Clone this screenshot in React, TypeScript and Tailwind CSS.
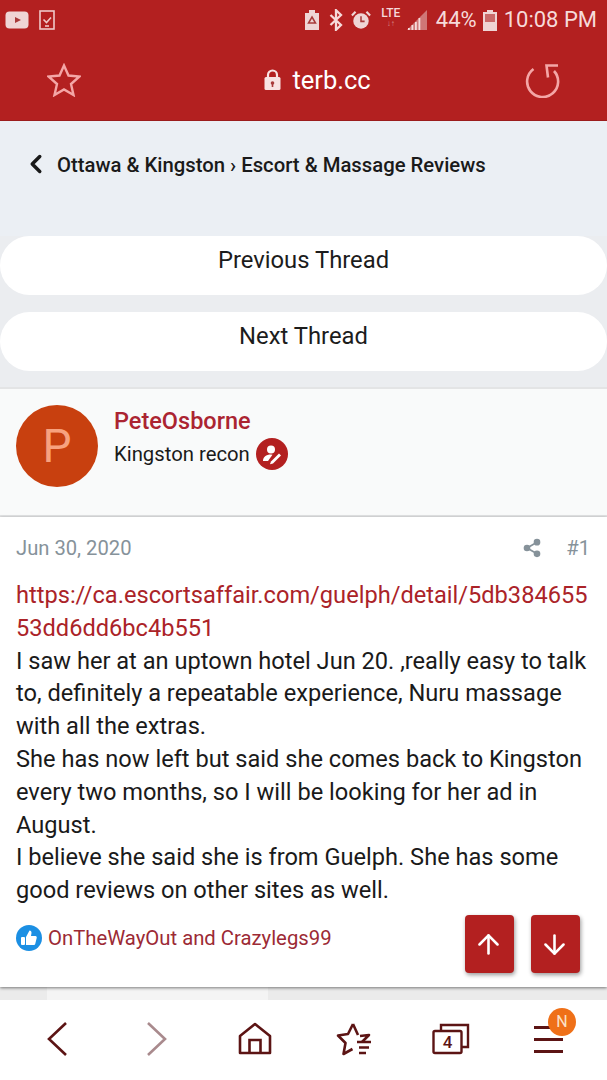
import React from 'react';
import { ArrowUp, ArrowDown, ChevronLeft, Share2 } from 'lucide-react';

const BODY_LINES = [
  'I saw her at an uptown hotel Jun 20. ,really easy to talk',
  'to, definitely a repeatable experience, Nuru massage',
  'with all the extras.',
  'She has now left but said she comes back to Kingston',
  'every two months, so I will be looking for her ad in',
  'August.',
  'I believe she said she is from Guelph. She has some',
  'good reviews on other sites as well.',
];

const StatusBar = () => (
  <div className="h-[40px] flex items-center justify-between pl-[5px] pr-[10px] text-[#f6dada]">
    <div className="flex items-center gap-[10px]">
      {/* youtube + task notification icons */}
      <svg width="24" height="18" viewBox="0 0 24 18">
        <rect x="0.5" y="0.5" width="23" height="17" rx="4" fill="#efd5d5" />
        <path d="M10 6l6 3-6 3z" fill="#a83a3a" />
      </svg>
      <svg width="16" height="20" viewBox="0 0 16 20" fill="none" stroke="#efc9c9" strokeWidth="1.6">
        <rect x="1" y="1" width="14" height="18" />
        <path d="M4.5 9.5l3 3 4.5-5" />
        <path d="M6 16h4" />
      </svg>
    </div>
    <div className="flex items-center">
      <svg width="14" height="20" viewBox="0 0 14 20" className="mr-[10px]">
        <path d="M4 0h6v3h4v17H0V3h4z" fill="#efd5d5" />
        <path d="M7 7l3.500 6h-7z" fill="none" stroke="#a83a3a" strokeWidth="1.500" />
      </svg>
      <svg width="14" height="22" viewBox="0 0 14 22" fill="none" stroke="#f6dada" strokeWidth="2.300" className="mr-[8px]">
        <path d="M1.500 6l10.500 10-5 4.800V1.200l5 4.800L1.500 16" />
      </svg>
      <svg width="20" height="22" viewBox="0 0 22 22" className="mr-[9px]">
        <circle cx="11" cy="12" r="8.500" fill="#efd5d5" />
        <path d="M11 7v5.500h4" fill="none" stroke="#a83a3a" strokeWidth="1.700" />
        <path d="M1 6l4-4M21 6l-4-4" stroke="#efd5d5" strokeWidth="2.400" />
      </svg>
      <div className="w-[22px] flex flex-col items-center mr-[5px] -mt-[6px]">
        <span className="text-[12px] leading-[13px] font-medium">LTE</span>
        <span className="text-[8px] leading-[8px] text-[#d98a8a]">↓↑</span>
      </div>
      <svg width="20" height="20" viewBox="0 0 20 20" className="mr-[9px]">
        <path d="M20 0v20H0z" fill="#cf7676" />
        <path d="M1 20v-2h1.800v2zM4.500 20v-5h1.800v5zM8 20v-8h1.800v8zM11.500 20V8h1.800v12z" fill="#f6dada" />
      </svg>
      <span className="text-[22px] leading-none mr-[6px]">44%</span>
      <svg width="14" height="21" viewBox="0 0 14 21" className="mr-[7px]">
        <path d="M4 0h6v2h4v19H0V2h4z" fill="#efd5d5" />
        <rect x="2" y="4" width="10" height="8" fill="#c96a6a" />
      </svg>
      <span className="text-[22px] leading-none">10:08 PM</span>
    </div>
  </div>
);

const AddressBar = () => (
  <div className="h-[80px] flex items-center justify-between pl-[47px] pr-[46px]">
    <svg width="34" height="34" viewBox="0 0 34 34" fill="none" stroke="#f4a6a6" strokeWidth="2.400">
      <polygon points="17,2.500 21.500,12.500 32.500,13.500 24,21 26.500,32 17,26.500 7.500,32 10,21 1.500,13.500 12.500,12.500" />
    </svg>
    <div className="flex items-center gap-[11px] text-white text-[25.500px] ml-[29px]">
      <svg width="17" height="22" viewBox="0 0 17 22">
        <path d="M4 9V6a4.500 4.500 0 0 1 9 0v3" fill="none" stroke="#f8e3e3" strokeWidth="2.200" />
        <rect x="0.500" y="8" width="16" height="13" rx="1.500" fill="#f8e3e3" />
        <circle cx="8.500" cy="14" r="1.800" fill="#a83a3a" />
        <rect x="7.700" y="14" width="1.600" height="4" fill="#a83a3a" />
      </svg>
      <span>terb.cc</span>
    </div>
    <svg width="36" height="36" viewBox="0 0 36 36" fill="none" stroke="#f4a6a6" strokeWidth="2.600">
      <path d="M8.500 7A15.500 15.500 0 1 0 29 9" />
      <path d="M33 3.500H21.500l1.500 12" />
    </svg>
  </div>
);

const ThreadButton = ({ label }: { label: string }) => (
  <div className="h-[59px] bg-white rounded-full flex items-center justify-center pb-[10px] text-[23.800px] text-[#1c1c1c]">
    {label}
  </div>
);

const BottomNav = () => {
  const stroke = '#5c1414';
  return (
    <div className="h-[80px] bg-white flex items-center pl-[46px] pb-[3px]">
      <svg width="22" height="36" viewBox="0 0 22 36" fill="none" stroke={stroke} strokeWidth="2.600">
        <path d="M20 2L3 18l17 16" />
      </svg>
      <svg width="22" height="36" viewBox="0 0 22 36" fill="none" stroke="#a98a8d" strokeWidth="2.600" className="ml-[78px]">
        <path d="M2 2l17 16L2 34" />
      </svg>
      <svg width="34" height="34" viewBox="0 0 34 34" fill="none" stroke={stroke} strokeWidth="2.600" className="ml-[70px]">
        <path d="M2 31V14L17 2l15 12v17z" strokeLinejoin="round" />
        <path d="M11.500 31V18h11v13" />
      </svg>
      <svg width="36" height="34" viewBox="0 0 36 34" fill="none" stroke={stroke} strokeWidth="2.600" className="ml-[64px]">
        <path d="M24 14l9-1-7 7M17 2l5 11M17 2l-5 10-10 1.500 7.500 7.500L7.500 32l9-5" strokeLinejoin="round" />
        <path d="M21 20h14M23 25.500h10M23 31h7" />
      </svg>
      <svg width="38" height="32" viewBox="0 0 38 32" fill="none" stroke={stroke} strokeWidth="2.400" className="ml-[60px]">
        <path d="M9 8V2h27v22h-6" />
        <rect x="1.500" y="8" width="28" height="22" rx="1.500" fill="white" />
        <text x="15.500" y="25" fontSize="17" fontWeight="500" fontFamily="Roboto" fill={stroke} stroke="none" textAnchor="middle">4</text>
      </svg>
      <div className="relative w-[29px] h-[27px] flex flex-col justify-between ml-[64px] mt-[2px]">
        <span className="h-[3px] bg-[#5c1414]" />
        <span className="h-[3px] bg-[#5c1414]" />
        <span className="h-[3px] bg-[#5c1414]" />
        <span className="absolute -top-[18px] left-[14px] w-[28px] h-[28px] rounded-full bg-[#ef7018] text-[#fbe3c8] text-[16px] flex items-center justify-center">
          N
        </span>
      </div>
    </div>
  );
};

export default function App() {
  return (
    <div className="w-[607px] h-[1080px] overflow-hidden bg-[#ebedf0] font-['Roboto',sans-serif]">
      {/* Browser chrome */}
      <div className="h-[121px] bg-[#b32020] border-b border-[#9b1c1c]">
        <StatusBar />
        <AddressBar />
      </div>

      {/* Breadcrumb */}
      <div className="h-[115px] pl-[21px] pt-[28px] flex items-start gap-[6px] text-[#1a1a1a] bg-[#ebeff4]">
        <ChevronLeft size={30} strokeWidth={2.800} />
        <div className="text-[20.300px] leading-[32px] font-medium">Ottawa &amp; Kingston › Escort &amp; Massage Reviews</div>
      </div>

      {/* Thread navigation */}
      <div className="flex flex-col gap-[17px] h-[151px] bg-[#ebedf0]">
        <ThreadButton label="Previous Thread" />
        <ThreadButton label="Next Thread" />
      </div>

      {/* Author */}
      <div className="h-[130px] bg-[#f9fafa] border-y-2 border-[#e3e4e5] flex pl-[16px] pt-[16px]">
        <div className="w-[82px] h-[82px] rounded-full bg-[#c8400f] text-[#f7a27f] text-[46px] flex items-center justify-center">P</div>
        <div className="ml-[16px] pt-[0px]">
          <div className="text-[#ab2431] text-[23.500px] leading-[32px] font-medium">PeteOsborne</div>
          <div className="flex items-center gap-[6px] mt-[1px]">
            <span className="text-[20.300px] leading-[32px] text-[#1a1a1a]">Kingston recon</span>
            <span className="w-[32px] h-[32px] rounded-full bg-[#b32020] flex items-center justify-center">
              <svg width="22" height="22" viewBox="0 0 22 22" fill="white">
                <circle cx="10" cy="6.500" r="4" />
                <path d="M2 18c0-4 3-6.500 8-6.500l1.500.3L7 18z" />
                <path d="M10 18.500l8-8 2 2-8 8-3 .8z" />
              </svg>
            </span>
          </div>
        </div>
      </div>

      {/* Post */}
      <div className="h-[470px] bg-white shadow-[0_1px_3px_rgba(0,0,0,0.5)] px-[16px] relative">
        <div className="flex items-center justify-between h-[60px] pt-[2px] text-[#86929a] text-[20.200px]">
          <span>Jun 30, 2020</span>
          <div className="flex items-center gap-[24px] pr-[1px]">
            <Share2 size={20} fill="#86929a" />
            <span>#1</span>
          </div>
        </div>
        <div className="text-[23.620px] leading-[32.800px] text-[#1a1a1a] mt-[2px]">
          <div className="text-[#ab2328] whitespace-nowrap">
            https://ca.escortsaffair.com/guelph/detail/5db384655
            <br />
            53dd6dd6bc4b551
          </div>
          {BODY_LINES.map((line) => (
            <div key={line} className="whitespace-nowrap">{line}</div>
          ))}
        </div>
        <div className="flex items-center gap-[6px] mt-[17px] text-[#9c2a35] text-[20.300px] leading-[28px]">
          <span className="w-[26px] h-[26px] rounded-full bg-[#1b8fe3] flex items-center justify-center">
            <svg width="18" height="18" viewBox="0 0 18 18" fill="white">
              <rect x="1" y="8" width="4" height="8" rx="1" />
              <path d="M6 8l3.500-6.500c1.500 0 2 1 2 2.500L11 7h4.500c1 0 1.500 1 1.200 2l-1.500 6c-.2.700-.8 1-1.500 1H6z" />
            </svg>
          </span>
          <span>OnTheWayOut and Crazylegs99</span>
        </div>
        {/* Jump buttons float over the post */}
        <div className="absolute right-[27px] top-[398px] flex gap-[17px]">
          <div className="w-[49px] h-[58px] rounded-[4px] bg-[#b32020] shadow-[1px_2px_4px_rgba(0,0,0,0.4)] flex items-center justify-center text-white">
            <ArrowUp size={31} strokeWidth={2} className="-ml-[3px]" />
          </div>
          <div className="w-[49px] h-[58px] rounded-[4px] bg-[#b32020] shadow-[1px_2px_4px_rgba(0,0,0,0.4)] flex items-center justify-center text-white">
            <ArrowDown size={31} strokeWidth={2} className="-ml-[3px]" />
          </div>
        </div>
      </div>

      {/* Sliver of the next post card behind the nav */}
      <div className="h-[13px] bg-[#ebebeb]">
        <div className="ml-[47px] w-[221px] h-full bg-[#f4f4f4]" />
      </div>
      <BottomNav />
    </div>
  );
}
